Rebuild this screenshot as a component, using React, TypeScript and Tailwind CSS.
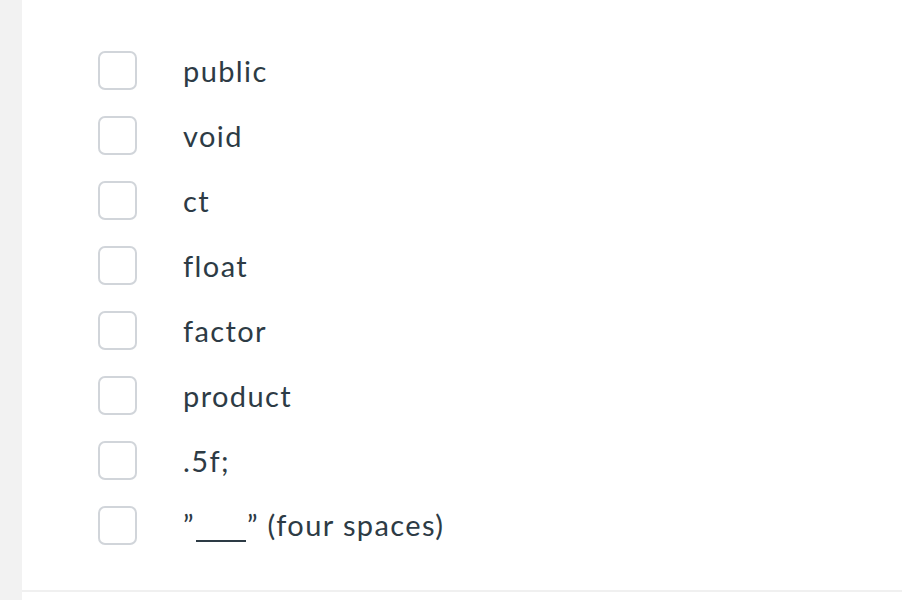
import React from 'react'

const options: React.ReactNode[] = [
  'public',
  'void',
  'ct',
  'float',
  'factor',
  'product',
  '.5f;',
  <>
    ”<span className="inline-block w-[50px] h-[6px] border-b-2 border-[#2d3b45] align-[-6px] mx-[1px]" />” (four spaces)
  </>,
]

export default function App() {
  return (
    <div className="flex w-[902px] h-[600px] bg-white" style={{ fontFamily: 'Lato, "Noto Sans", sans-serif' }}>
      <div className="w-[22px] shrink-0 bg-[#f2f2f2]" />
      <div className="flex-1 flex flex-col">
        <ul className="flex flex-col pt-[38px] pl-[76px] pb-[32px] border-b-2 border-[#f0f0f0]">
          {options.map((o, i) => (
            <li key={i} className="flex items-center h-[65px] gap-[46px]">
              <span className="w-[39px] h-[39px] shrink-0 rounded-[7px] border-2 border-[#d1d5da] bg-white" />
              <span className="text-[29px] leading-none tracking-[1.4px] text-[#2d3b45]">{o}</span>
            </li>
          ))}
        </ul>
      </div>
    </div>
  )
}
